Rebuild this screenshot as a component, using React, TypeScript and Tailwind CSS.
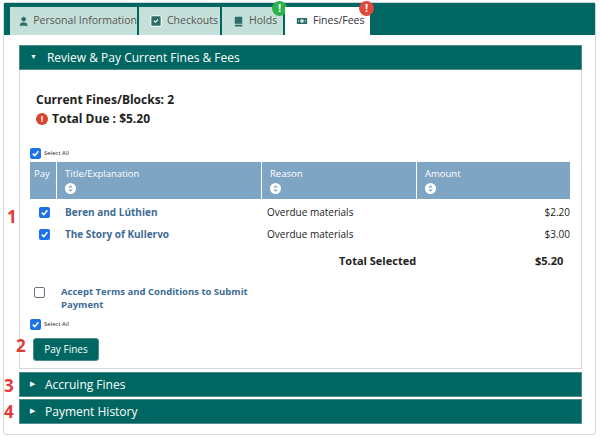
import { User, SquareCheck, Book, Banknote } from 'lucide-react'

const font = { fontFamily: '"Open Sans", "Liberation Sans", sans-serif' }

function Badge({ color }: { color: string }) {
  return (
    <span className={`absolute -top-[6px] right-[-4px] flex h-[15px] w-[15px] items-center justify-center rounded-full text-[11px] font-bold text-white ${color}`}>
      !
    </span>
  )
}

function SortIcon() {
  return (
    <svg width="11" height="11" viewBox="0 0 12 12" className="mt-[2px]">
      <circle cx="6" cy="6" r="6" fill="white" />
      <path d="M3.5 5 L6 2.5 L8.5 5 Z M3.5 7 L6 9.5 L8.5 7 Z" fill="#7fa5c4" />
    </svg>
  )
}

function Check({ on }: { on: boolean }) {
  return on ? (
    <span className="flex h-[11px] w-[11px] items-center justify-center rounded-[2px] bg-[#1a73e8]">
      <svg width="9" height="9" viewBox="0 0 10 10"><path d="M2 5.2 L4.2 7.4 L8.2 2.6" stroke="white" strokeWidth="1.8" fill="none" /></svg>
    </span>
  ) : (
    <span className="block h-[11px] w-[11px] rounded-[2px] border border-gray-500 bg-white" />
  )
}

function Bar({ title, open }: { title: string; open?: boolean }) {
  return (
    <div className="flex h-[25px] items-center gap-[10px] border border-[#4f8f8b] bg-[#006661] pl-[10px] text-[12px] text-white">
      <span className="text-[7px]">{open ? '▼' : '▶'}</span>
      {title}
    </div>
  )
}

const tab = 'flex h-[28px] items-center gap-[4px] whitespace-nowrap text-[10.5px]'

export default function App() {
  return (
    <div style={font} className="relative h-[437px] w-[600px] bg-white pt-[2px] text-[#222]">
      <span className="absolute left-[7px] top-[204px] text-[17px] font-bold text-[#e53935]">1</span>
      <span className="absolute left-[16px] top-[333px] text-[17px] font-bold text-[#e53935]">2</span>
      <span className="absolute left-[4px] top-[373px] text-[17px] font-bold text-[#e53935]">3</span>
      <span className="absolute left-[4px] top-[399px] text-[17px] font-bold text-[#e53935]">4</span>

      <div className="ml-[3px] h-[433px] w-[593px] rounded-[3px] border border-gray-300">
        <div className="flex h-[32px] items-end gap-[2px] bg-[#006661] pl-[6px]">
          <div className={`${tab} w-[127px] bg-[#c5e0d8] pl-[8px] text-[#555]`}>
            <User size={13} className="fill-[#2c6e6a] text-[#2c6e6a]" /> Personal Information
          </div>
          <div className={`${tab} w-[81px] bg-[#c5e0d8] pl-[10px] text-[#555]`}>
            <SquareCheck size={14} className="fill-[#2c6e6a] text-white" /> Checkouts
          </div>
          <div className={`${tab} relative w-[61px] bg-[#c5e0d8] pl-[10px] text-[#555]`}>
            <Book size={13} className="fill-[#2c6e6a] text-[#c5e0d8]" /> Holds
            <Badge color="bg-[#2bb24c]" />
          </div>
          <div className={`${tab} relative w-[85px] bg-white pl-[10px] text-[#333]`}>
            <Banknote size={14} className="fill-[#2c6e6a] text-white" /> Fines/Fees
            <Badge color="bg-[#e04a3b]" />
          </div>
        </div>

        <div className="pl-[15px] pr-[13px] pt-[10px]">
          <Bar title="Review & Pay Current Fines & Fees" open />
          <div className="h-[299px] border border-t-0 border-gray-300 pl-[10px] pr-[8px] pt-[21px]">
            <div className="pl-[6px] text-[12px] font-bold">Current Fines/Blocks: 2</div>
            <div className="mt-[1px] flex items-center gap-[4px] pl-[6px] text-[12px] font-bold">
              <span className="flex h-[12px] w-[12px] items-center justify-center rounded-full bg-[#d9442f] text-[9px] text-white">!</span>
              Total Due : $5.20
            </div>
            <div className="mt-[20px] flex items-center gap-[3px] pl-0 text-[6px]"><Check on /> Select All</div>
            <div className="mt-[3px] flex h-[37px] gap-[1px] text-[9.5px] text-white">
              <div className="w-[26px] bg-[#7fa5c4] pl-[4px] pt-[5px]">Pay</div>
              <div className="w-[204px] bg-[#7fa5c4] pl-[8px] pt-[5px]">Title/Explanation<SortIcon /></div>
              <div className="w-[154px] bg-[#7fa5c4] pl-[8px] pt-[5px]">Reason<SortIcon /></div>
              <div className="w-[153px] bg-[#7fa5c4] pl-[8px] pt-[5px]">Amount<SortIcon /></div>
            </div>
            <div className="h-[2px]" />
            {[
              ['Beren and Lúthien', '$2.20'],
              ['The Story of Kullervo', '$3.00'],
            ].map(([t, a]) => (
              <div key={t} className="flex h-[22px] items-center text-[10px]">
                <div className="w-[35px] pl-[9px]"><Check on /></div>
                <div className="w-[202px] font-bold text-[#3d6b95]">{t}</div>
                <div className="w-[150px]">Overdue materials</div>
                <div className="w-[153px] text-right">{a}</div>
              </div>
            ))}
            <div className="mt-[8px] flex text-[11px] font-bold">
              <div className="w-[309px]" />
              <div className="w-[196px]">Total Selected</div>
              <div>$5.20</div>
            </div>
            <div className="mt-[15px] flex gap-[16px] pl-[4px]">
              <div className="pt-[2px]"><Check on={false} /></div>
              <div className="w-[200px] text-[9.5px] font-bold leading-[13px] text-[#3d6b95]">Accept Terms and Conditions to Submit Payment</div>
            </div>
            <div className="mt-[8px] flex items-center gap-[3px] text-[6px]"><Check on /> Select All</div>
            <button className="ml-[3px] mt-[8px] h-[23px] w-[66px] rounded-[3px] border border-[#4f8f8b] bg-[#006661] text-[10px] text-white">Pay Fines</button>
          </div>
          <div className="mt-[3px]"><Bar title="Accruing Fines" /></div>
          <div className="mt-[2px]"><Bar title="Payment History" /></div>
        </div>
      </div>
    </div>
  )
}
